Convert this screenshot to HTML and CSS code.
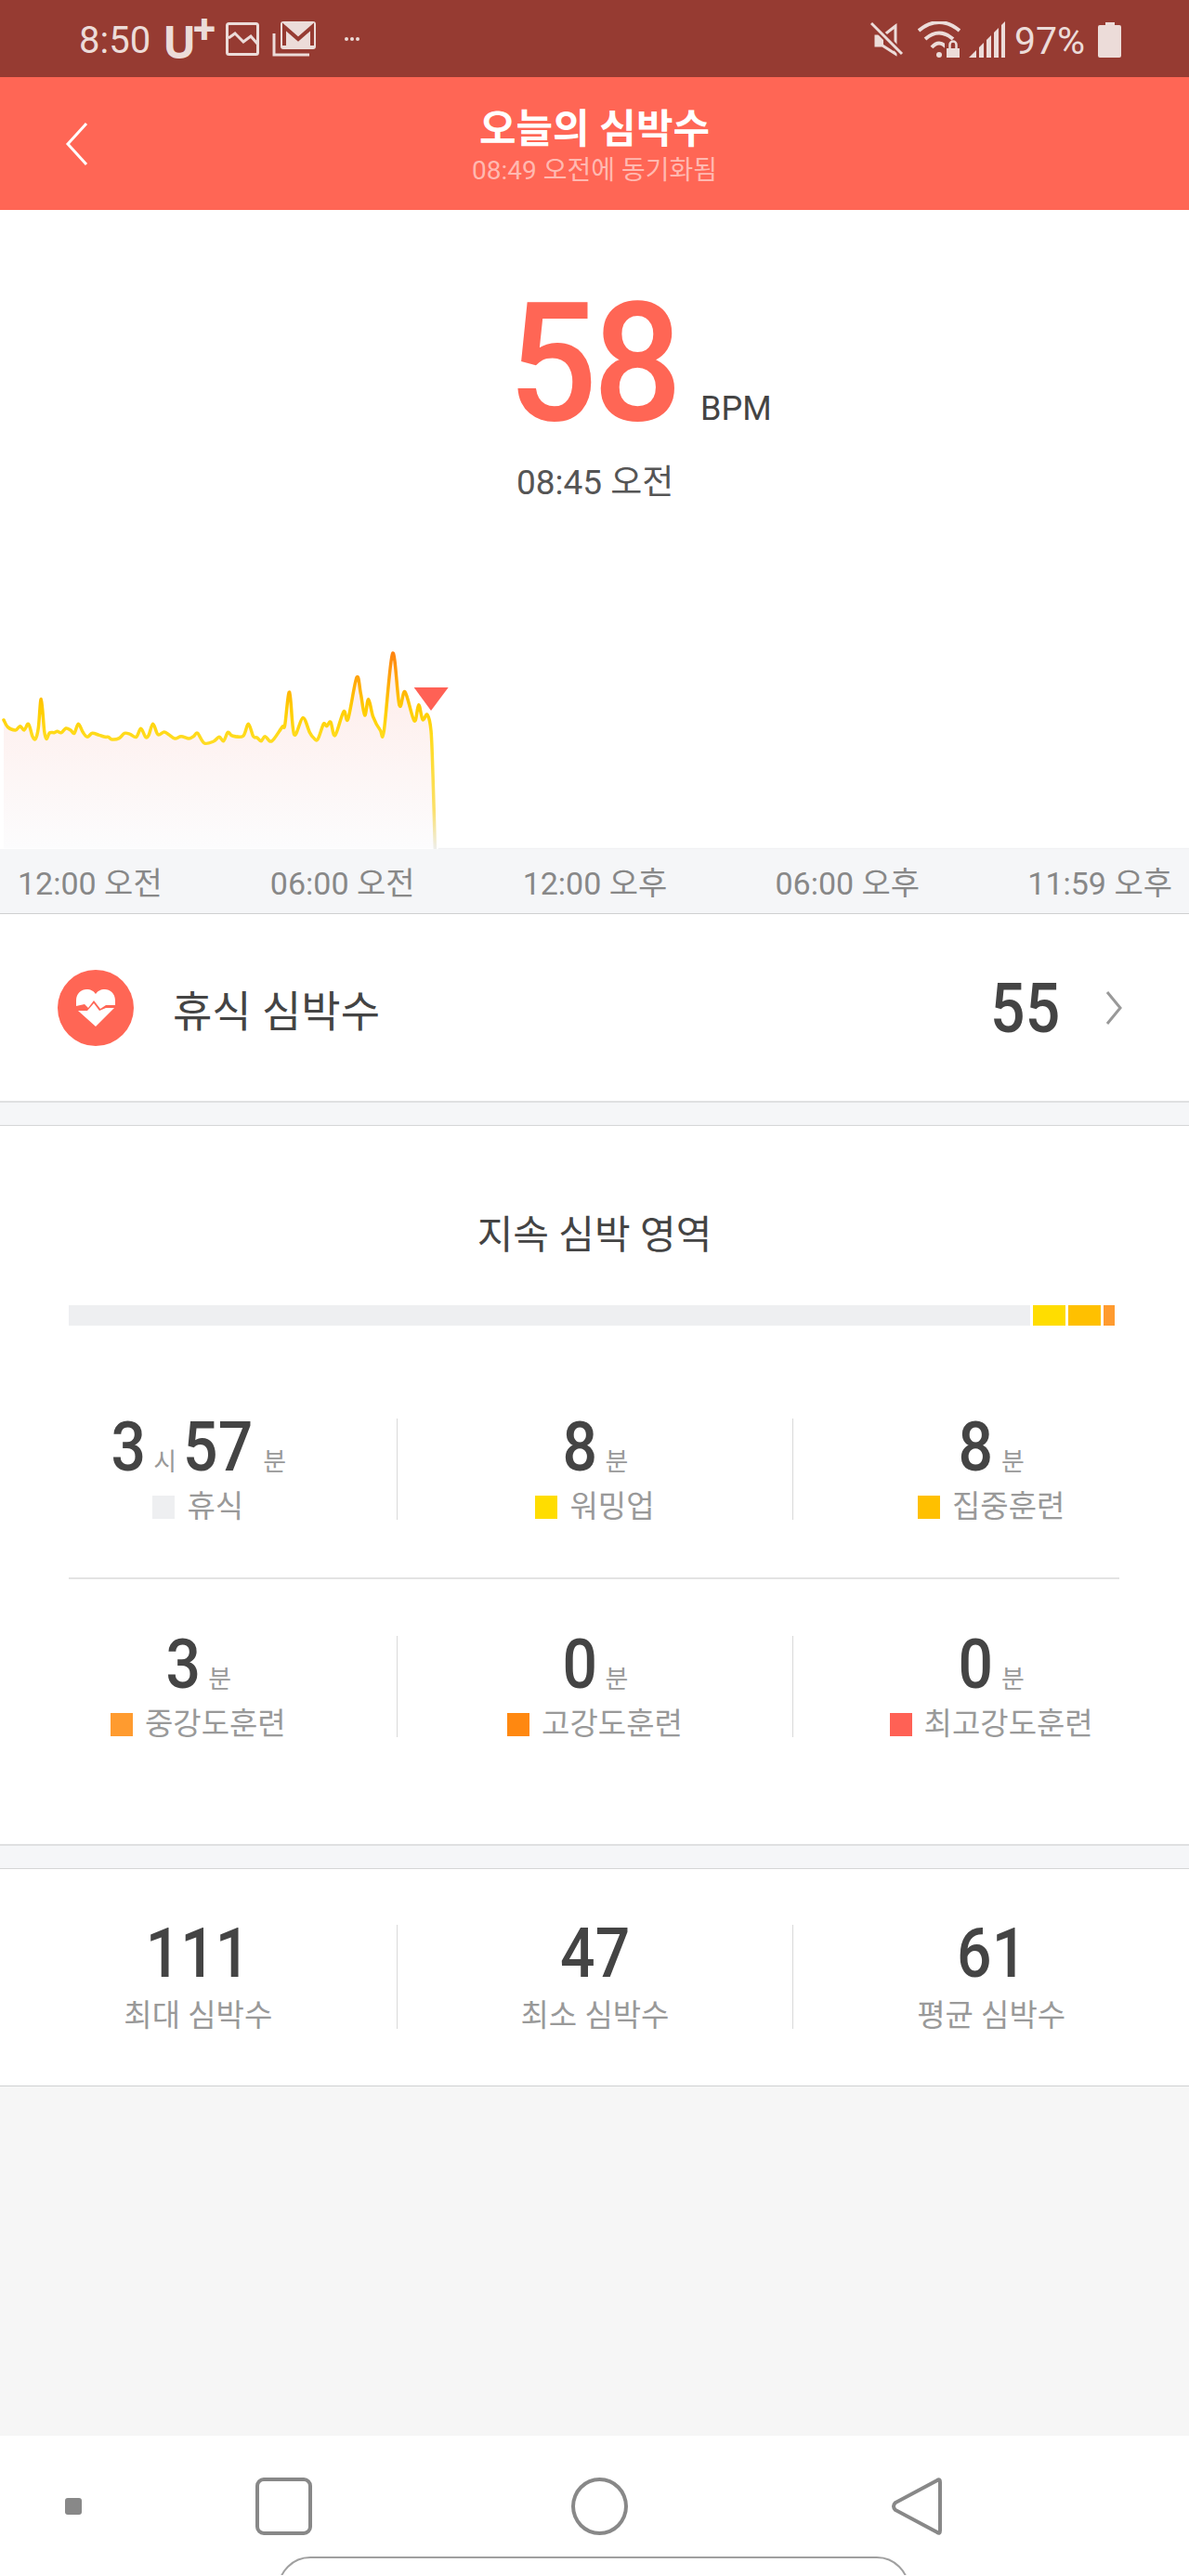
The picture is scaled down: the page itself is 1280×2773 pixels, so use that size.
FILE: index.html
```html
<!DOCTYPE html>
<html lang="ko">
<head>
    <meta charset="UTF-8">
    <title>오늘의 심박수</title>
    <link rel="stylesheet" href="styles.css">
</head>
<body>
    <!-- phone status bar -->
    <div class="statusbar">
        <span class="clock">8:50</span>
        <span class="carrier">U</span><span class="carrier-plus">+</span>
        <svg class="st-pic" width="36" height="36" viewBox="0 0 36 36"><rect x="1.5" y="1.5" width="33" height="33" rx="2" fill="none" stroke="#ecdcd9" stroke-width="3"/><path d="M3 17l7-5 9 9 8-6 7 8" fill="none" stroke="#ecdcd9" stroke-width="3"/></svg>
        <svg class="st-mail" width="48" height="40" viewBox="0 0 48 40"><rect x="9" y="1" width="38" height="30" rx="3" fill="#ecdcd9"/><path d="M13 27V7l15 13L43 7v20" fill="none" stroke="#963b32" stroke-width="4"/><path d="M2 14v23h38" fill="none" stroke="#ecdcd9" stroke-width="3"/></svg>
        <span class="st-dots"></span>
        <svg class="st-mute" width="36" height="38" viewBox="0 0 36 38"><path d="M27 5L13 16H6v10h7l14 9z" fill="none" stroke="#ecdcd9" stroke-width="3"/><path d="M6 17h8v9H6z" fill="#ecdcd9"/><path d="M1 2l33 33" stroke="#963b32" stroke-width="7"/><path d="M1 2l33 33" stroke="#ecdcd9" stroke-width="3"/></svg>
        <svg class="st-wifi" width="46" height="40" viewBox="0 0 46 40"><g fill="none" stroke="#ecdcd9" stroke-width="4"><path d="M1 10Q23-8 45 10"/><path d="M8 19Q23 6 38 19"/><path d="M15 28Q23 19 31 28"/></g><circle cx="23" cy="36" r="3" fill="#ecdcd9"/><rect x="29" y="22" width="17" height="18" fill="#963b32"/><path d="M34.500 29v-4a3.500 3.500 0 0 1 7 0v4" fill="none" stroke="#ecdcd9" stroke-width="2.500"/><rect x="31" y="29" width="14" height="10" fill="#ecdcd9"/></svg>
        <svg class="st-signal" width="39" height="39" viewBox="0 0 39 39"><g fill="#ecdcd9"><path d="M0 39l8-8v8z"/><path d="M11 39V28l5-5v16z"/><path d="M19 39V20l5-5v24z"/><path d="M27 39V12l5-5v32z"/><path d="M35 39V4l4-4v39z"/></g></svg>
        <span class="battery-text">97%</span>
        <svg class="st-batt" width="25" height="38" viewBox="0 0 25 38"><path d="M8 0h10v3h5q2 0 2 2v31q0 2-2 2H2q-2 0-2-2V5q0-2 2-2h6z" fill="#ecdcd9"/></svg>
    </div>

    <!-- title bar -->
    <div class="appbar">
        <svg class="back" width="28" height="48" viewBox="0 0 28 48"><path d="M24 2L4 24l20 22" fill="none" stroke="#fff" stroke-width="3"/></svg>
        <div class="appbar-text">
            <div class="title">오늘의 심박수</div>
            <div class="subtitle">08:49 오전에 동기화됨</div>
        </div>
    </div>

    <!-- current reading and day chart -->
    <div class="hero">
        <div class="reading">
            <div class="reading-top">
                <span class="bpm">58</span>
                <span class="bpm-unit">BPM</span>
            </div>
            <div class="reading-time">08:45 오전</div>
        </div>
        <svg class="chart" width="1280" height="372" viewBox="0 0 3840 1116">
            <defs>
                <linearGradient id="lineColor" gradientUnits="userSpaceOnUse" x1="0" y1="130" x2="0" y2="760">
                    <stop offset="0" stop-color="#ff8410"/>
                    <stop offset="0.14" stop-color="#ffa80c"/>
                    <stop offset="0.28" stop-color="#ffcc00"/>
                    <stop offset="0.42" stop-color="#ffdb1c"/>
                    <stop offset="0.8" stop-color="#fbe06a"/>
                    <stop offset="1" stop-color="#eeeeea"/>
                </linearGradient>
                <linearGradient id="areaColor" gradientUnits="userSpaceOnUse" x1="0" y1="300" x2="0" y2="760">
                    <stop offset="0" stop-color="#fef0ee"/>
                    <stop offset="1" stop-color="#fcfcfd"/>
                </linearGradient>
            </defs>
            <g transform="translate(0 354)">
                <line x1="1415" y1="760" x2="3840" y2="760" stroke="#eeeff1" stroke-width="3"/>
                <path id="hrArea" fill="url(#areaColor)"/>
                <path id="hrLine" fill="none" stroke="url(#lineColor)" stroke-width="10.500" stroke-linecap="round" stroke-linejoin="round"/>
                <polygon points="1337,240 1448,240 1392,315" fill="#ff6155"/>
            </g>
        </svg>
    </div>
    <div class="axis">
        <span>12:00 오전</span>
        <span>06:00 오전</span>
        <span>12:00 오후</span>
        <span>06:00 오후</span>
        <span>11:59 오후</span>
    </div>

    <!-- resting heart rate -->
    <div class="rest-row">
        <svg class="rest-icon" width="82" height="82" viewBox="0 0 82 82">
            <circle cx="41" cy="41" r="41" fill="#ff6655"/>
            <path d="M20 39V33c0-8 6-12 11-12 5 0 8 2 10 5 2-3 5-5 10-5 5 0 11 4 11 12v5H52l-6 4-7-9-6 8-4-4z" fill="#fff"/>
            <path d="M22 44h10l7-8 6 8 7-3h9L41 61z" fill="#fff"/>
        </svg>
        <span class="rest-label">휴식 심박수</span>
        <span class="num rest-value">55</span>
        <svg class="rest-arrow" width="18" height="36" viewBox="0 0 18 36"><path d="M2 1l14 17L2 35" fill="none" stroke="#999" stroke-width="3"/></svg>
    </div>
    <div class="spacer"></div>

    <!-- zone breakdown -->
    <div class="zones">
        <div class="zones-title">지속 심박 영역</div>
        <div class="zone-bar">
            <span class="seg seg-rest"></span>
            <span class="seg seg-warm"></span>
            <span class="seg seg-focus"></span>
            <span class="seg seg-mid"></span>
        </div>
        <div class="stat-row zone-row-first">
            <div class="stat">
                <div class="stat-num"><span class="num">3</span><span class="unit">시</span><span class="num">57</span><span class="unit">분</span></div>
                <div class="stat-label"><i class="dot c-rest"></i>휴식</div>
            </div>
            <div class="stat">
                <div class="stat-num"><span class="num">8</span><span class="unit">분</span></div>
                <div class="stat-label"><i class="dot c-warm"></i>워밍업</div>
            </div>
            <div class="stat">
                <div class="stat-num"><span class="num">8</span><span class="unit">분</span></div>
                <div class="stat-label"><i class="dot c-focus"></i>집중훈련</div>
            </div>
        </div>
        <div class="zone-line"></div>
        <div class="stat-row">
            <div class="stat">
                <div class="stat-num"><span class="num">3</span><span class="unit">분</span></div>
                <div class="stat-label"><i class="dot c-mid"></i>중강도훈련</div>
            </div>
            <div class="stat">
                <div class="stat-num"><span class="num">0</span><span class="unit">분</span></div>
                <div class="stat-label"><i class="dot c-high"></i>고강도훈련</div>
            </div>
            <div class="stat">
                <div class="stat-num"><span class="num">0</span><span class="unit">분</span></div>
                <div class="stat-label"><i class="dot c-max"></i>최고강도훈련</div>
            </div>
        </div>
    </div>
    <div class="spacer"></div>

    <!-- max, min, average -->
    <div class="summary">
        <div class="stat-row">
            <div class="stat stat-tall">
                <div class="stat-num"><span class="num">111</span></div>
                <div class="stat-label">최대 심박수</div>
            </div>
            <div class="stat stat-tall">
                <div class="stat-num"><span class="num">47</span></div>
                <div class="stat-label">최소 심박수</div>
            </div>
            <div class="stat stat-tall">
                <div class="stat-num"><span class="num">61</span></div>
                <div class="stat-label">평균 심박수</div>
            </div>
        </div>
    </div>
    <div class="filler"></div>

    <!-- android navigation bar -->
    <div class="navbar">
        <div class="nav-icons">
            <span class="nav-dot"></span>
            <span class="nav-square"></span>
            <span class="nav-circle"></span>
            <svg class="nav-back" width="55" height="62" viewBox="0 0 55 62"><path d="M50 3q3-2 3 2v52q0 4-3 2L5 35q-4-4 0-8z" fill="none" stroke="#888" stroke-width="4"/></svg>
        </div>
        <div class="nav-pill"></div>
    </div>
    <script src="chart.js"></script>
</body>
</html>
```

FILE: styles.css
```css
* {
    box-sizing: border-box;
}
html, body {
    margin: 0;
    height: 2773px;
    overflow: hidden;
}
body {
    background-color: #fff;
    color: #444;
    font-family: Roboto, "Noto Sans CJK KR", sans-serif;
}

/* status bar */
.statusbar {
    display: flex;
    align-items: center;
    height: 83px;
    padding: 0 73px 0 85px;
    background-color: #963b32;
    color: #ecdcd9;
}
.clock {
    font-size: 40px;
    width: 90px;
    margin-top: 4px;
}
.carrier {
    font-size: 48px;
    font-weight: 700;
    width: 33px;
    margin-top: 6px;
    font-family: "Open Sans", sans-serif;
}
.carrier-plus {
    font-size: 44px;
    font-weight: 700;
    width: 35px;
    margin-top: -22px;
}
.st-pic {
    margin-top: 1px;
}
.st-mail {
    margin-left: 14px;
    margin-top: 1px;
}
.st-dots {
    width: 4px;
    height: 4px;
    margin-left: 30px;
    border-radius: 50%;
    background-color: #ecdcd9;
    box-shadow: 6px 0 #ecdcd9, 12px 0 #ecdcd9;
}
.st-mute {
    margin-left: auto;
    margin-top: 1px;
}
.st-wifi {
    margin-left: 15px;
    margin-top: 2px;
}
.st-signal {
    margin-left: 9px;
    margin-top: 2px;
}
.battery-text {
    font-size: 41px;
    margin-left: 10px;
    width: 90px;
    margin-top: 4px;
}
.st-batt {
    flex: none;
    margin-top: 3px;
}

/* title bar */
.appbar {
    display: grid;
    grid-template-columns: 1fr auto 1fr;
    align-items: center;
    height: 143px;
    padding: 4px 69px 0;
    background-color: #ff6655;
}
.appbar-text {
    grid-column: 2;
    grid-row: 1;
    text-align: center;
}
.title {
    color: #fff;
    font-size: 43px;
    font-weight: 700;
    line-height: 54px;
}
.subtitle {
    color: #ffb9b1;
    font-size: 28px;
    line-height: 36px;
}
.back {
    grid-column: 1;
    grid-row: 1;
    margin-top: -4px;
}

/* current reading */
.hero {
    height: 688px;
    padding-top: 76px;
}
.reading {
    padding-left: 553px;
}
.reading-top {
    display: flex;
    align-items: baseline;
}
.bpm {
    display: inline-block;
    width: 176px;
    margin-left: -6px;
    color: #ff6655;
    font-size: 178px;
    font-weight: 500;
    line-height: 1;
    letter-spacing: -5px;
    transform: scaleX(.95);
    transform-origin: left;
}
.bpm-unit {
    margin-left: 31px;
    font-size: 36px;
}
.reading-time {
    margin-top: 18px;
    margin-left: 3px;
    color: #555;
    font-size: 37px;
    line-height: 44px;
}
.chart {
    display: block;
}

/* chart axis */
.axis {
    display: flex;
    justify-content: space-between;
    align-items: center;
    height: 70px;
    padding: 0 18px 0 19px;
    background-color: #f5f6f8;
    border-bottom: 1px solid #cfd0d1;
    color: #888;
    font-size: 34px;
}

/* resting heart rate */
.rest-row {
    display: flex;
    align-items: center;
    height: 203px;
    padding: 0 72px 0 62px;
    border-bottom: 2px solid #dfe0e1;
}
.rest-label {
    margin-left: 42px;
    font-size: 46px;
}
.num {
    display: inline-block;
    font-size: 75px;
    font-weight: 500;
    line-height: 60px;
    color: #444;
    transform: scaleX(.88);
    margin: 0 -2px;
}
.rest-value {
    margin-left: auto;
}
.rest-arrow {
    margin-left: 46px;
}
.spacer {
    height: 25px;
    background-color: #f5f6f8;
    border-bottom: 1px solid #d5d6d7;
}

/* zones */
.zones {
    padding: 88px 0 115px;
    border-bottom: 2px solid #dfe0e1;
}
.zones-title {
    text-align: center;
    font-size: 42px;
    line-height: 60px;
}
.zone-bar {
    display: flex;
    gap: 3px;
    height: 22px;
    margin: 45px 0 100px 74px;
}
.seg {
    display: block;
}
.seg-rest {
    width: 1035px;
    background-color: #eeeff1;
}
.seg-warm {
    width: 35px;
    background-color: #ffdd00;
}
.seg-focus {
    width: 35px;
    background-color: #ffc000;
}
.seg-mid {
    width: 12px;
    background-color: #ff9b2f;
}
.zone-line {
    height: 2px;
    margin: 62px 75px 61px 74px;
    background-color: #e3e3e3;
}
.stat-row {
    display: grid;
    grid-template-columns: repeat(3, 1fr);
}
.stat {
    height: 109px;
    text-align: center;
    border-left: 1px solid #d9d9d9;
}
.stat:first-child {
    border-left: 0;
}
.stat-tall {
    height: 112px;
}
.stat-num {
    height: 60px;
    white-space: nowrap;
}
.unit {
    margin-left: 8px;
    margin-right: 4px;
    color: #999;
    font-size: 27px;
}
.unit:last-child {
    margin-right: 0;
}
.stat-label {
    display: flex;
    justify-content: center;
    align-items: center;
    margin-top: 21px;
    color: #999;
    font-size: 33px;
    line-height: 28px;
}
.dot {
    display: block;
    width: 24px;
    height: 25px;
    margin-right: 13px;
}
.c-rest {
    background-color: #eeeff1;
}
.c-warm {
    background-color: #ffdd00;
}
.c-focus {
    background-color: #ffc000;
}
.c-mid {
    background-color: #ff9b2f;
}
.c-high {
    background-color: #ff8810;
}
.c-max {
    background-color: #ff6155;
}

/* max min average */
.summary {
    padding: 60px 0 61px;
    border-bottom: 1px solid #cfd0d1;
}
.stat-tall .stat-label {
    margin-top: 24px;
}
.filler {
    height: 376px;
    background-color: #f6f6f6;
}

/* nav bar */
.navbar {
    height: 150px;
    overflow: hidden;
    padding-top: 45px;
}
.nav-icons {
    display: flex;
    align-items: center;
    height: 62px;
    padding-left: 70px;
}
.nav-dot {
    width: 18px;
    height: 18px;
    border-radius: 3px;
    background-color: #888;
}
.nav-square {
    width: 61px;
    height: 62px;
    margin-left: 187px;
    border: 4px solid #888;
    border-radius: 9px;
}
.nav-circle {
    width: 61px;
    height: 62px;
    margin-left: 279px;
    border: 4px solid #888;
    border-radius: 50%;
}
.nav-back {
    margin-left: 283px;
}
.nav-pill {
    width: 680px;
    height: 70px;
    margin: 23px 0 0 299px;
    border: 2px solid #a0a0a0;
    border-radius: 52px;
}
```

FILE: chart.js
```js
// heart rate samples, read off in chart units (3 units = 1px)
var samples = [
    [12,345],[25,368],[50,378],[65,365],[78,378],[92,358],[105,398],[115,406],[124,370],[133,278],
    [143,380],[150,406],[160,387],[175,386],[185,382],[198,386],[213,372],[228,378],[240,388],[253,358],
    [268,385],[282,400],[298,388],[320,394],[340,400],[350,400],[362,408],[385,404],[402,388],[420,391],
    [440,400],[455,373],[470,400],[480,395],[494,358],[510,392],[530,384],[545,392],[565,405],[585,398],
    [610,405],[625,398],[638,388],[660,420],[690,414],[708,400],[722,413],[736,385],[750,396],[785,397],
    [802,358],[818,398],[830,402],[843,413],[856,398],[872,414],[885,406],[912,367],[920,362],[935,255],
    [950,392],[978,338],[1000,385],[1012,402],[1026,408],[1045,358],[1055,365],[1068,352],[1082,395],[1110,318],
    [1124,342],[1152,208],[1165,260],[1178,330],[1190,278],[1205,335],[1228,378],[1240,380],[1268,130],[1290,298],
    [1308,254],[1338,348],[1352,296],[1365,344],[1380,328],[1392,380],[1398,520],[1405,760]
];

// catmull-rom through the samples so the line stays smooth
var d = "M" + samples[0][0] + " " + samples[0][1];
for (var i = 0; i < samples.length - 1; i++) {
    var p0 = samples[Math.max(i - 1, 0)];
    var p1 = samples[i];
    var p2 = samples[i + 1];
    var p3 = samples[Math.min(i + 2, samples.length - 1)];
    d += " C" + (p1[0] + (p2[0] - p0[0]) / 6).toFixed(1) + " " + (p1[1] + (p2[1] - p0[1]) / 6).toFixed(1)
       + " " + (p2[0] - (p3[0] - p1[0]) / 6).toFixed(1) + " " + (p2[1] - (p3[1] - p1[1]) / 6).toFixed(1)
       + " " + p2[0] + " " + p2[1];
}
document.getElementById("hrLine").setAttribute("d", d);
document.getElementById("hrArea").setAttribute("d", d + " L12 760 Z");
```
